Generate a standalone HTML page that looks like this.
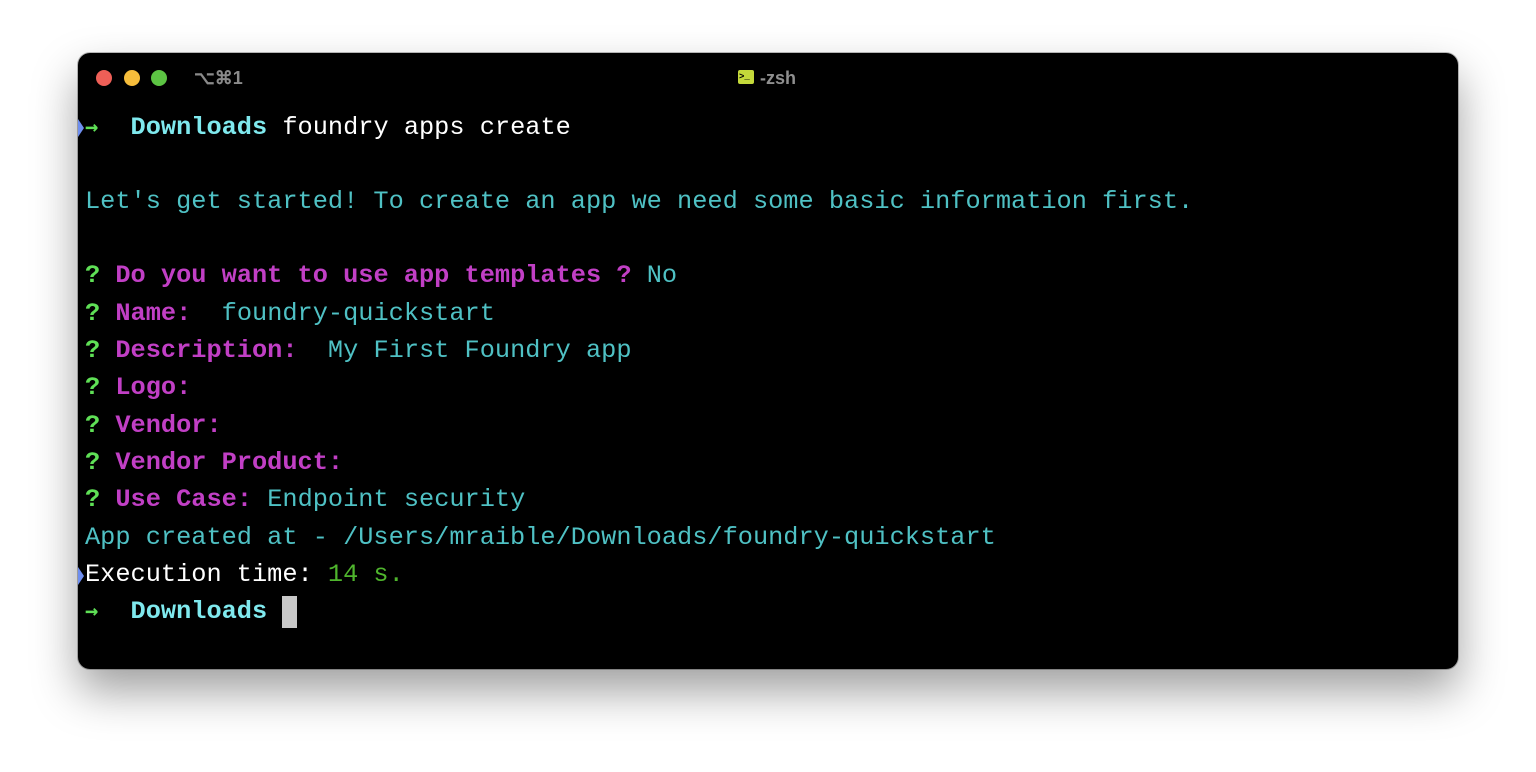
<!DOCTYPE html>
<html><head><style>
body{margin:0;width:1536px;height:772px;background:#fff;overflow:hidden;position:relative}
.win{position:absolute;left:78px;top:53px;width:1380px;height:616px;background:#000;border-radius:12px;box-shadow:0 22px 45px rgba(0,0,0,.38),0 0 0 1px rgba(0,0,0,.25)}
.dot{position:absolute;top:70px;width:16px;height:16px;border-radius:50%}
.t{position:absolute;font-family:"Liberation Sans",sans-serif;font-weight:bold;font-size:18px;color:#8a8a8a;top:68px}
.l{position:absolute;left:85px;font-family:"Liberation Mono",monospace;font-size:25.3px;white-space:pre;line-height:30px;color:#fff}
.c{color:#4fc1c4}.b{font-weight:bold}.cy{color:#7fe9ee;font-weight:bold}.g{color:#5fe056;font-weight:bold}.m{color:#c13fc5;font-weight:bold}.gr{color:#4fb52d}
.ar{font-family:"DejaVu Sans Mono",monospace;font-size:22px;display:inline-block;width:15.18px}
.mk{position:absolute;left:78px;width:6px;height:18px;background:#6f8ff0;clip-path:polygon(0 0,100% 50%,0 100%)}
</style></head><body>
<div class="win"></div>
<div class="dot" style="left:96px;background:#ee5f57"></div>
<div class="dot" style="left:124px;background:#f6bd3b"></div>
<div class="dot" style="left:151px;background:#5cc443"></div>
<div class="t" style="left:194px">⌥⌘1</div>
<div style="position:absolute;left:738px;top:70px;width:15px;height:14px;background:#c4d93a;border-radius:2px;font:bold 9px 'Liberation Mono',monospace;color:#000;line-height:14px;padding-left:1px">&gt;_</div>
<div class="t" style="left:760px;color:#8f8f8f">-zsh</div>
<div class="mk" style="top:119px"></div>
<div class="l" style="top:113px"><span class="g ar">→</span>  <span class="cy">Downloads</span> foundry apps create</div>
<div class="l c" style="top:187px">Let's get started! To create an app we need some basic information first.</div>
<div class="l" style="top:261px"><span class="g">?</span> <span class="m">Do you want to use app templates ?</span> <span class="c">No</span></div>
<div class="l" style="top:299px"><span class="g">?</span> <span class="m">Name:</span>  <span class="c">foundry-quickstart</span></div>
<div class="l" style="top:336px"><span class="g">?</span> <span class="m">Description:</span>  <span class="c">My First Foundry app</span></div>
<div class="l" style="top:373px"><span class="g">?</span> <span class="m">Logo:</span></div>
<div class="l" style="top:411px"><span class="g">?</span> <span class="m">Vendor:</span></div>
<div class="l" style="top:448px"><span class="g">?</span> <span class="m">Vendor Product:</span></div>
<div class="l" style="top:485px"><span class="g">?</span> <span class="m">Use Case:</span> <span class="c">Endpoint security</span></div>
<div class="l c" style="top:523px">App created at - /Users/mraible/Downloads/foundry-quickstart</div>
<div class="mk" style="top:567px"></div>
<div class="l" style="top:560px">Execution time: <span class="gr">14 s.</span></div>
<div class="l" style="top:597px"><span class="g ar">→</span>  <span class="cy">Downloads</span> </div>
<div style="position:absolute;left:282px;top:596px;width:15px;height:32px;background:#c8c8c8"></div>
</body></html>
